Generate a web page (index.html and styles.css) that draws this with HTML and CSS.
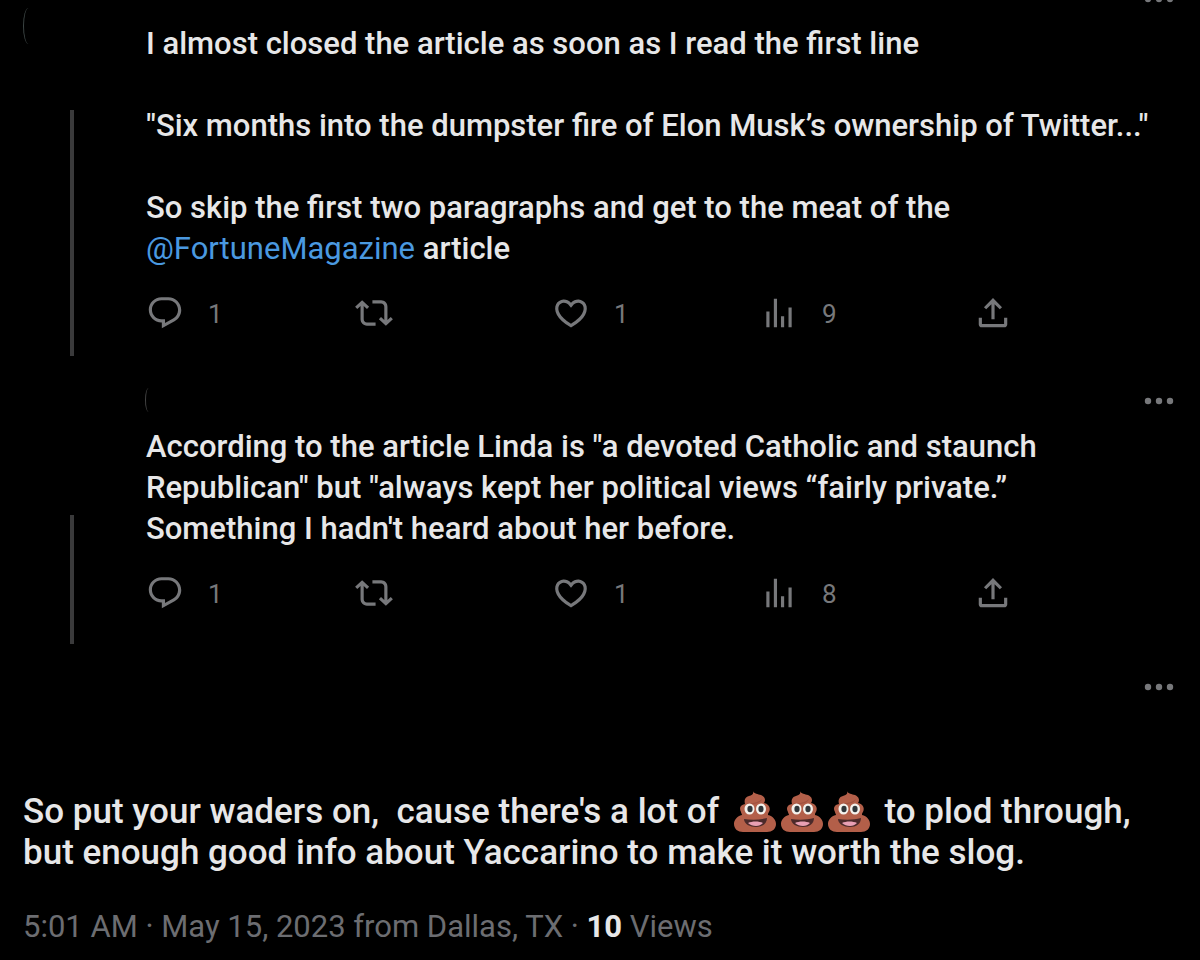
FILE: index.html
```
<!DOCTYPE html>
<html lang="en">
<head>
    <meta charset="UTF-8">
    <meta name="viewport" content="width=device-width, initial-scale=1.0">
    <title>Thread</title>
    <link rel="stylesheet" href="styles.css">
</head>
<body>
    <svg class="sprite" aria-hidden="true">
        <symbol id="reply" viewBox="0 0 24 24"><path d="M1.751 10c0-4.42 3.584-8 8.005-8h4.366c4.49 0 8.129 3.64 8.129 8.13 0 2.96-1.607 5.68-4.196 7.11l-8.054 4.46v-3.69h-.067c-4.49.1-8.183-3.51-8.183-8.01zm8.005-6c-3.317 0-6.005 2.69-6.005 6 0 3.37 2.77 6.08 6.138 6.01l.351-.01h1.761v2.3l5.087-2.81c1.951-1.08 3.163-3.13 3.163-5.36 0-3.39-2.744-6.13-6.129-6.13H9.756z"/></symbol>
        <symbol id="retweet" viewBox="0 0 24 24"><path d="M4.5 3.88l4.432 4.14-1.364 1.46L5.5 7.55V16c0 1.1.896 2 2 2H13v2H7.5c-2.209 0-4-1.79-4-4V7.55L1.432 9.48.068 8.02 4.5 3.88zM16.5 6H11V4h5.5c2.209 0 4 1.79 4 4v8.45l2.068-1.93 1.364 1.46-4.432 4.14-4.432-4.14 1.364-1.46 2.068 1.93V8c0-1.1-.896-2-2-2z"/></symbol>
        <symbol id="like" viewBox="0 0 24 24"><path d="M16.697 5.5c-1.222-.06-2.679.51-3.89 2.16l-.805 1.09-.806-1.09C9.984 6.01 8.526 5.44 7.304 5.5c-1.243.07-2.349.78-2.91 1.91-.552 1.12-.633 2.78.479 4.82 1.074 1.97 3.257 4.27 7.129 6.61 3.87-2.34 6.052-4.64 7.126-6.61 1.111-2.04 1.03-3.7.477-4.82-.561-1.13-1.666-1.84-2.908-1.91zm4.187 7.69c-1.351 2.48-4.001 5.12-8.379 7.67l-.503.3-.504-.3c-4.379-2.55-7.029-5.19-8.382-7.67-1.36-2.5-1.41-4.86-.514-6.67.887-1.79 2.647-2.91 4.601-3.01 1.651-.09 3.368.56 4.798 2.01 1.429-1.45 3.146-2.1 4.796-2.01 1.954.1 3.714 1.22 4.601 3.01.896 1.81.846 4.17-.514 6.67z"/></symbol>
        <symbol id="views" viewBox="0 0 24 24"><path d="M8.75 21V3h2v18h-2zM18 21V8.5h2V21h-2zM4 21l.004-10h2L6 21H4zm9.248 0v-7h2v7h-2z"/></symbol>
        <symbol id="share" viewBox="0 0 24 24"><path d="M12 2.59l5.7 5.7-1.41 1.42L13 6.41V16h-2V6.41l-3.3 3.3-1.41-1.42L12 2.59zM21 15v4.2c0 1-.8 1.8-1.8 1.8H4.8C3.8 21 3 20.200 3 19.200V15h2v4h14v-4h2z"/></symbol>
        <symbol id="more" viewBox="0 0 30 8"><circle cx="4" cy="4" r="3.200"/><circle cx="15" cy="4" r="3.200"/><circle cx="26" cy="4" r="3.200"/></symbol>
        <symbol id="poop" viewBox="0 0 42 42">
            <path fill="#b35f49" d="M19 0c1 3 5 3 8 4 4 2 5 5 3 8 5 1 7 5 5 9-1 1-1 2-1 3 5 1 8 5 8 9 0 5-4 8-9 8H9c-5 0-9-3-9-8 0-4 3-8 8-9 0-1-1-2-1-3-2-4-1-7 4-8-1-4 0-7 4-8 3-1 5-2 4-5z"/>
            <path fill="#a05240" d="M12 12c5 1 12 0 16-4-1 4-10 7-16 4z"/>
            <ellipse cx="15.500" cy="18" rx="5" ry="5.500" fill="#f4f1ec"/>
            <ellipse cx="27" cy="18" rx="5" ry="5.500" fill="#f4f1ec"/>
            <ellipse cx="16" cy="18" rx="2.600" ry="3.200" fill="#30363a"/>
            <ellipse cx="27" cy="18" rx="2.600" ry="3.200" fill="#30363a"/>
            <path fill="#4b2a2a" d="M10 28c7 1 16 1 23-1 0 6-5 9-11 9s-12-3-12-8z"/>
            <path fill="#e8a0b4" d="M14 32c4-2 11-2 15 0-2 2-4 3-7 3s-6-1-8-3z"/>
        </symbol>
    </svg>

    <main class="thread">
        <article class="tweet first">
            <div class="rail"><span class="avatar-edge"></span></div>
            <div class="content">
                <button class="more" aria-label="More"><svg><use href="#more"/></svg></button>
                <p class="text">I almost closed the article as soon as I read the first line<br><br>"Six months into the dumpster fire of Elon Musk’s ownership of Twitter..."<br><br>So skip the first two paragraphs and get to the meat of the<br><a href="#">@FortuneMagazine</a> article</p>
                <div class="actions">
                    <button aria-label="Reply"><svg><use href="#reply"/></svg><span>1</span></button>
                    <button aria-label="Retweet"><svg><use href="#retweet"/></svg></button>
                    <button aria-label="Like"><svg><use href="#like"/></svg><span>1</span></button>
                    <button aria-label="Views"><svg><use href="#views"/></svg><span>9</span></button>
                    <button aria-label="Share"><svg><use href="#share"/></svg></button>
                </div>
            </div>
        </article>

        <article class="tweet second">
            <div class="rail"></div>
            <div class="content">
                <span class="name-edge"></span>
                <button class="more" aria-label="More"><svg><use href="#more"/></svg></button>
                <p class="text">According to the article Linda is "a devoted Catholic and staunch<br>Republican" but "always kept her political views “fairly private.”<br>Something I hadn't heard about her before.</p>
                <div class="actions">
                    <button aria-label="Reply"><svg><use href="#reply"/></svg><span>1</span></button>
                    <button aria-label="Retweet"><svg><use href="#retweet"/></svg></button>
                    <button aria-label="Like"><svg><use href="#like"/></svg><span>1</span></button>
                    <button aria-label="Views"><svg><use href="#views"/></svg><span>8</span></button>
                    <button aria-label="Share"><svg><use href="#share"/></svg></button>
                </div>
            </div>
        </article>

        <article class="focused">
            <button class="more" aria-label="More"><svg><use href="#more"/></svg></button>
            <p class="text large">So put your waders on, &nbsp;cause there's a lot of <span class="emoji"><svg><use href="#poop"/></svg><svg><use href="#poop"/></svg><svg><use href="#poop"/></svg></span> to plod through,<br>but enough good info about Yaccarino to make it worth the slog.</p>
            <p class="meta">5:01 AM · May 15, 2023 from Dallas, TX · <strong>10</strong> Views</p>
        </article>
    </main>
</body>
</html>
```
FILE: styles.css
```
body {
    margin: 0;
    background: #000;
    color: #e7e7e8;
    font-family: Roboto, "Liberation Sans", sans-serif;
}
.sprite {
    position: absolute;
    width: 0;
    height: 0;
}
.thread {
    overflow: hidden;
}
.tweet, .focused {
    position: relative;
}
.tweet {
    display: grid;
    grid-template-columns: 146px 1fr;
}
.rail {
    display: flex;
    justify-content: center;
    padding-top: 110px;
    padding-right: 2px;
}
.rail::after {
    content: "";
    width: 4px;
    background: #3a3a3b;
}
.first .content {
    padding: 23px 0 24px;
}
.second .rail {
    padding-top: 159px;
}
.second .content {
    padding: 70px 0 32px;
}
.text {
    margin: 0;
    font-size: 31px;
    font-weight: 500;
    line-height: 41px;
    white-space: nowrap;
}
.text a {
    color: #4a99e0;
    font-weight: 400;
    text-decoration: none;
}
button {
    padding: 0;
    border: 0;
    background: none;
    color: #77787b;
    font-family: inherit;
    cursor: pointer;
}
svg {
    fill: currentColor;
}
.more {
    position: absolute;
    top: 41px;
    right: 26px;
}
.more svg {
    display: block;
    width: 30px;
    height: 8px;
}
.first .more {
    top: -5px;
}
.focused .more {
    top: 39px;
}
.actions {
    display: grid;
    grid-template-columns: 209px 197px 208px 214px 1fr;
    margin-top: 25px;
}
.actions button {
    display: flex;
    align-items: center;
    gap: 24px;
    font-size: 26px;
    line-height: 38px;
}
.actions span {
    padding-top: 3px;
    line-height: 35px;
}
.actions svg {
    width: 38px;
    height: 38px;
}
.avatar-edge {
    position: absolute;
    top: 8px;
    left: 23px;
    width: 10px;
    height: 36px;
    border-left: 1px solid #3c4544;
    border-radius: 50%;
}
.name-edge {
    position: absolute;
    top: 32px;
    left: 145px;
    width: 6px;
    height: 24px;
    border-left: 1px solid #444;
    border-radius: 50%;
}
.focused {
    padding: 147px 23px 0;
}
.large {
    font-size: 35px;
}
.emoji {
    display: inline-flex;
    gap: 5px;
    margin: -8px 6px -4px;
    vertical-align: middle;
}
.emoji svg {
    width: 42px;
    height: 42px;
}
.meta {
    margin: 33px 0 0;
    color: #6c6d71;
    font-size: 31px;
    line-height: 41px;
}
.meta strong {
    color: #e7e7e8;
}
```
